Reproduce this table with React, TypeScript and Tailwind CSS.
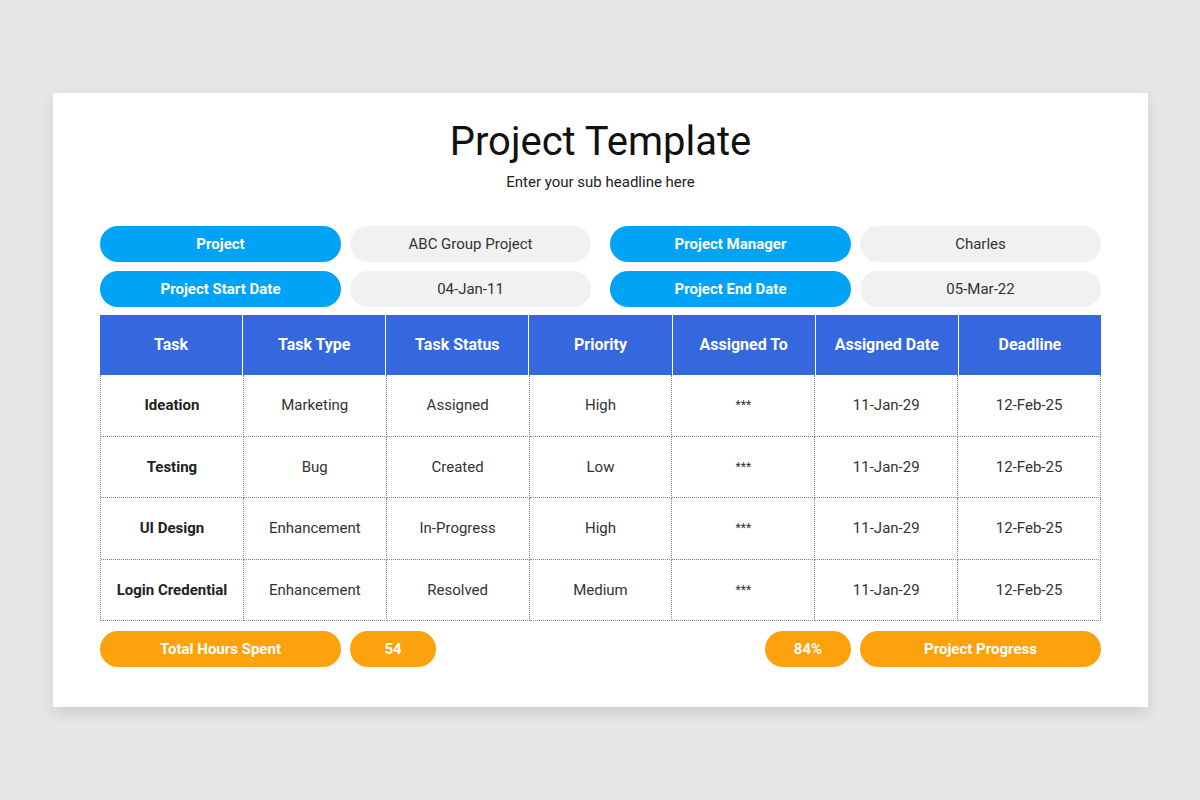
import React from "react";

const rows = [
  ["Ideation", "Marketing", "Assigned", "High", "***", "11-Jan-29", "12-Feb-25"],
  ["Testing", "Bug", "Created", "Low", "***", "11-Jan-29", "12-Feb-25"],
  ["UI Design", "Enhancement", "In-Progress", "High", "***", "11-Jan-29", "12-Feb-25"],
  ["Login Credential", "Enhancement", "Resolved", "Medium", "***", "11-Jan-29", "12-Feb-25"],
];
const heads = ["Task", "Task Type", "Task Status", "Priority", "Assigned To", "Assigned Date", "Deadline"];

function Label({ children }: { children: React.ReactNode }) {
  return (
    <div className="h-[36px] w-[241px] rounded-full bg-[#00a3f6] text-white font-bold text-[15px] flex items-center justify-center">
      {children}
    </div>
  );
}
function Value({ children }: { children: React.ReactNode }) {
  return (
    <div className="h-[36px] w-[241px] rounded-full bg-[#f1f1f1] text-[#333] text-[15px] flex items-center justify-center">
      {children}
    </div>
  );
}
function Orange({ children, w }: { children: React.ReactNode; w: string }) {
  return (
    <div className={`h-[36px] ${w} rounded-full bg-[#fba20c] text-white font-bold text-[15px] flex items-center justify-center`}>
      {children}
    </div>
  );
}

export default function App() {
  return (
    <div className="min-h-[800px] w-full bg-[#e8e6e7] pt-[93px]" style={{ fontFamily: "Roboto, 'Noto Sans', sans-serif" }}>
      <div className="ml-[53px] w-[1095px] h-[614px] bg-white shadow-[0_6px_14px_rgba(0,0,0,0.12)] px-[47px] pt-[23px]">
        <h1 className="text-center text-[40px] leading-[52px] text-[#111] font-normal">Project Template</h1>
        <p className="text-center text-[15px] leading-[20px] text-[#222] mt-[4px]">Enter your sub headline here</p>
        <div className="mt-[34px] flex flex-col gap-[9px]">
          <div className="flex">
            <Label>Project</Label>
            <div className="ml-[9px]"><Value>ABC Group Project</Value></div>
            <div className="ml-[19px]"><Label>Project Manager</Label></div>
            <div className="ml-[9px]"><Value>Charles</Value></div>
          </div>
          <div className="flex">
            <Label>Project Start Date</Label>
            <div className="ml-[9px]"><Value>04-Jan-11</Value></div>
            <div className="ml-[19px]"><Label>Project End Date</Label></div>
            <div className="ml-[9px]"><Value>05-Mar-22</Value></div>
          </div>
        </div>
        <div className="mt-[8px] w-[1001px]">
          <div className="grid grid-cols-7 gap-px bg-white">
            {heads.map((h) => (
              <div key={h} className="h-[60px] bg-[#3567de] text-white font-bold text-[16px] flex items-center justify-center">
                {h}
              </div>
            ))}
          </div>
          <div className="grid grid-cols-7 border-l border-dotted border-[#888]">
            {rows.map((r, ri) =>
              r.map((c, ci) => (
                <div
                  key={ri + "-" + ci}
                  className={`h-[61.5px] border-r border-b border-dotted border-[#888] flex items-center justify-center ${
                    ci === 0 ? "font-bold text-[#222] text-[15px]" : ci === 4 ? "text-[#333] text-[12px]" : "text-[#333] text-[15px]"
                  }`}
                >
                  {c}
                </div>
              ))
            )}
          </div>
        </div>
        <div className="mt-[10px] flex w-[1001px]">
          <Orange w="w-[241px]">Total Hours Spent</Orange>
          <div className="ml-[9px]"><Orange w="w-[86px]">54</Orange></div>
          <div className="ml-auto"><Orange w="w-[86px]">84%</Orange></div>
          <div className="ml-[9px]"><Orange w="w-[241px]">Project Progress</Orange></div>
        </div>
      </div>
    </div>
  );
}
